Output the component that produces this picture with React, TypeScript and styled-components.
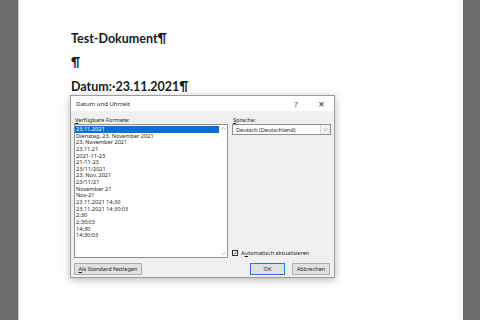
import React from "react";
import styled, { createGlobalStyle } from "styled-components";

const Global = createGlobalStyle`
  html, body { margin: 0; padding: 0; }
  body { width: 480px; height: 320px; overflow: hidden; background: #6b6b6b; }
`;

const Screen = styled.div`
  width: 480px;
  height: 320px;
  display: flex;
  background: #6b6b6b;
`;

const Page = styled.div`
  position: relative;
  margin-left: 18px;
  width: 445px;
  height: 320px;
  background: #ffffff;
  border-left: 1px solid #cfcfcf;
  box-sizing: border-box;
  padding: 32px 0 0 52px;
`;

const Para = styled.p`
  margin: 0 0 10px 0;
  height: 14px;
  font-family: "Lato", "Open Sans", sans-serif;
  font-weight: 700;
  font-size: 12.5px;
  line-height: 14px;
  color: #1a1a1a;
`;

const Dialog = styled.div`
  position: absolute;
  left: 51px;
  top: 95px;
  width: 265px;
  height: 183px;
  box-sizing: border-box;
  border: 1px solid #9a9a9a;
  background: #f0f0f0;
  box-shadow: 0 2px 8px rgba(0, 0, 0, 0.28);
  display: flex;
  flex-direction: column;
  font-family: "Noto Sans", "Open Sans", sans-serif;
  font-size: 5.6px;
  color: #1e1e1e;
`;

const TitleBar = styled.div`
  height: 15px;
  background: #ffffff;
  display: flex;
  align-items: center;
  padding-left: 5px;
  font-size: 6px;
`;

const Title = styled.span`
  flex: 1;
`;

const TitleBtn = styled.span<{ $w: number }>`
  width: ${(p) => p.$w}px;
  text-align: center;
  font-size: 7.5px;
  color: #333;
`;

const Body = styled.div`
  display: grid;
  grid-template-columns: 154px 99px;
  column-gap: 4px;
  padding: 5px 0 0 3px;
`;

const Column = styled.div`
  display: flex;
  flex-direction: column;
`;

const Label = styled.div`
  height: 8px;
  line-height: 8px;
  padding-left: 1px;
  white-space: nowrap;
  u { text-decoration: underline; }
`;

const ListBox = styled.div`
  height: 134px;
  box-sizing: border-box;
  border: 1px solid #8f8f8f;
  background: #ffffff;
  display: flex;
`;

const Items = styled.div`
  flex: 1;
  padding-top: 1px;
`;

const Item = styled.div<{ $sel?: boolean }>`
  height: 6.65px;
  line-height: 6.65px;
  padding-left: 1px;
  white-space: nowrap;
  background: ${(p) => (p.$sel ? "#0a6fd6" : "transparent")};
  color: ${(p) => (p.$sel ? "#ffffff" : "#1e1e1e")};
`;

const ScrollBar = styled.div`
  width: 8px;
  display: flex;
  flex-direction: column;
  justify-content: space-between;
  align-items: center;
  padding: 2px 0;
  background: #ffffff;
`;

const Select = styled.div`
  height: 11px;
  box-sizing: border-box;
  border: 1px solid #8f8f8f;
  background: #ffffff;
  display: flex;
  align-items: center;
  padding-left: 3px;
  white-space: nowrap;
`;

const SelectText = styled.span`
  flex: 1;
`;

const SelectArrow = styled.span`
  width: 9px;
  height: 9px;
  display: flex;
  align-items: center;
  justify-content: center;
  border-left: 1px solid #d8d8d8;
  background: #f2f2f2;
`;

const Spacer = styled.div`
  flex: 1;
`;

const CheckRow = styled.div`
  display: flex;
  align-items: center;
  gap: 3px;
  height: 8px;
  margin-bottom: 1px;
  white-space: nowrap;
`;

const Box = styled.span`
  width: 6px;
  height: 6px;
  box-sizing: border-box;
  border: 1px solid #333;
  background: #fff;
  display: flex;
  align-items: center;
  justify-content: center;
`;

const Footer = styled.div`
  display: flex;
  align-items: center;
  justify-content: space-between;
  padding: 5px 4px 0 3px;
`;

const Buttons = styled.div`
  display: flex;
  gap: 7px;
`;

const Button = styled.button<{ $w: number; $default?: boolean }>`
  width: ${(p) => p.$w}px;
  height: 12px;
  padding: 0;
  box-sizing: border-box;
  border: 1px solid ${(p) => (p.$default ? "#2a7bd0" : "#adadad")};
  background: #e1e1e1;
  font-family: inherit;
  font-size: 5.6px;
  color: #1e1e1e;
  line-height: 10px;
  white-space: nowrap;
  u { text-decoration: underline; }
`;

const Chevron = ({ up }: { up?: boolean }) => (
  <svg width="5" height="3" viewBox="0 0 5 3">
    <path
      d={up ? "M0.5 2.5 L2.5 0.5 L4.5 2.5" : "M0.5 0.5 L2.5 2.5 L4.5 0.5"}
      fill="none"
      stroke="#a0a0a0"
      strokeWidth="0.8"
    />
  </svg>
);

const formats = [
  "23.11.2021",
  "Dienstag, 23. November 2021",
  "23. November 2021",
  "23.11.21",
  "2021-11-23",
  "21-11-23",
  "23/11/2021",
  "23. Nov. 2021",
  "23/11/21",
  "November 21",
  "Nov-21",
  "23.11.2021 14:30",
  "23.11.2021 14:30:03",
  "2:30",
  "2:30:03",
  "14:30",
  "14:30:03",
];

export default function App() {
  return (
    <>
      <Global />
      <Screen>
        <Page>
          <Para>Test-Dokument¶</Para>
          <Para>¶</Para>
          <Para>Datum:·23.11.2021¶</Para>
          <Dialog>
            <TitleBar>
              <Title>Datum und Uhrzeit</Title>
              <TitleBtn $w={24}>?</TitleBtn>
              <TitleBtn $w={26}>✕</TitleBtn>
            </TitleBar>
            <Body>
              <Column>
                <Label>
                  <u>V</u>erfügbare Formate:
                </Label>
                <ListBox>
                  <Items>
                    {formats.map((f, i) => (
                      <Item key={f} $sel={i === 0}>
                        {f}
                      </Item>
                    ))}
                  </Items>
                  <ScrollBar>
                    <Chevron up />
                    <Chevron />
                  </ScrollBar>
                </ListBox>
              </Column>
              <Column>
                <Label>
                  <u>S</u>prache:
                </Label>
                <Select>
                  <SelectText>Deutsch (Deutschland)</SelectText>
                  <SelectArrow>
                    <Chevron />
                  </SelectArrow>
                </Select>
                <Spacer />
                <CheckRow>
                  <Box>
                    <svg width="4" height="4" viewBox="0 0 4 4">
                      <path d="M0.4 2 L1.6 3.2 L3.6 0.6" fill="none" stroke="#222" strokeWidth="0.7" />
                    </svg>
                  </Box>
                  <span>
                    A<u>u</u>tomatisch aktualisieren
                  </span>
                </CheckRow>
              </Column>
            </Body>
            <Footer>
              <Button $w={68}>
                <u>A</u>ls Standard festlegen
              </Button>
              <Buttons>
                <Button $w={35} $default>
                  OK
                </Button>
                <Button $w={38}>Abbrechen</Button>
              </Buttons>
            </Footer>
          </Dialog>
        </Page>
      </Screen>
    </>
  );
}
